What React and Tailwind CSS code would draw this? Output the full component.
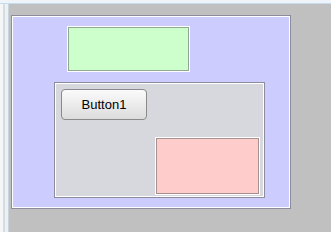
import React from "react";

const Box = ({ className }) => <div className={className} />;

export default function App() {
  return (
    <div className="w-[331px] h-[232px] bg-[#c0c0c0] flex flex-col overflow-hidden font-['Liberation_Sans',Arial,sans-serif]">
      {/* top strip */}
      <div className="h-[4px] shrink-0 bg-[#eef4fa] border-b border-[#c6dbeb]" />
      <div className="flex flex-1">
        {/* left strip */}
        <div className="w-[9px] shrink-0 flex">
          <div className="w-[3px] bg-[#f4f6f8]" />
          <div className="w-[2px] bg-[#d8dcdf]" />
          <div className="w-[3px] bg-[#eaf2f8]" />
          <div className="w-[1px] bg-[#c8d4dc]" />
        </div>

        {/* main panel */}
        <div className="ml-[2px] mt-[11px] w-[280px] h-[194px] bg-[#ccccff] border border-[#8c8c9c] shadow-[inset_0_0_0_1px_#fff] p-[1px] flex flex-col">
          <Box className="ml-[55px] mt-[10px] w-[121px] h-[44px] bg-[#ccffcc] border border-[#90a890] shadow-[0_0_0_1px_#fff]" />

          <div className="ml-[41px] mt-[11px] w-[211px] h-[116px] bg-[#d6d8de] border border-[#8c8c9c] shadow-[inset_0_0_0_1px_#fff] p-[1px] flex flex-col">
            <button className="ml-[5px] mt-[5px] w-[86px] h-[31px] rounded-[4px] border border-[#8a8a8a] bg-gradient-to-b from-[#fbfbfb] to-[#dcdcdc] text-[13px] text-black flex items-center justify-center">
              Button1
            </button>
            <Box className="ml-[100px] mt-[18px] w-[103px] h-[56px] bg-[#ffcccc] border border-[#a89090] shadow-[0_0_0_1px_#fff]" />
          </div>
        </div>
      </div>
    </div>
  );
}
